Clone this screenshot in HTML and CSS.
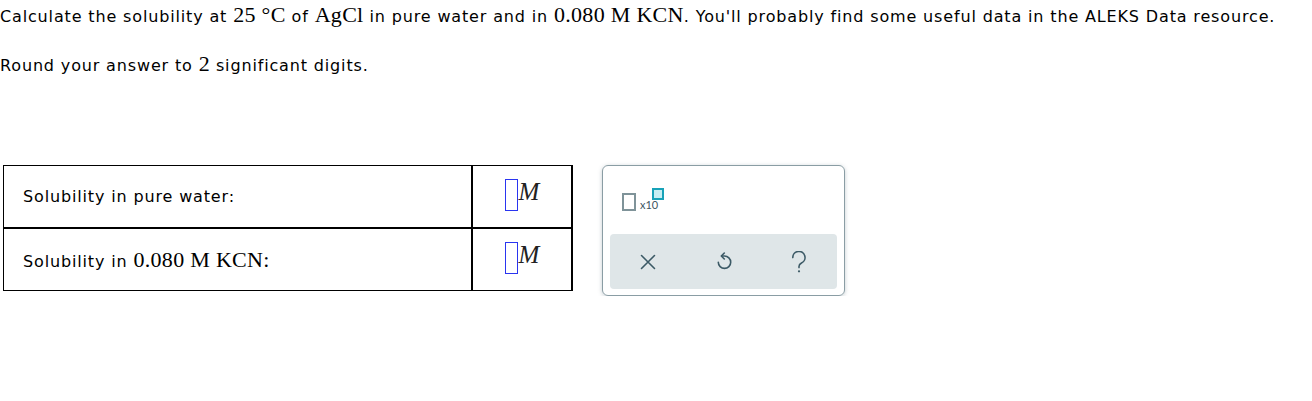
FILE: index.html
```html
<!DOCTYPE html>
<html>
<head>
<meta charset="utf-8">
<link rel="stylesheet" href="styles.css">
</head>
<body>
<div class="page">
  <p class="line first">Calculate the solubility at <span class="math">25 °C</span> of <span class="math">AgCl</span> in pure water and in <span class="math">0.080 M KCN</span>. You'll probably find some useful data in the ALEKS Data resource.</p>
  <p class="line second">Round your answer to <span class="math">2</span> significant digits.</p>

  <div class="answer-area">
    <table class="answers">
      <tr>
        <td class="label">Solubility in pure water:</td>
        <td class="value"><span class="slot"></span><span class="unit">M</span></td>
      </tr>
      <tr class="last">
        <td class="label">Solubility in <span class="math">0.080 M KCN:</span></td>
        <td class="value"><span class="slot"></span><span class="unit">M</span></td>
      </tr>
    </table>

    <div class="palette">
      <div class="palette-top">
        <div class="sci">
          <span class="sci-box"></span>
          <span class="sci-x">x10</span>
          <span class="sci-exp"></span>
        </div>
      </div>
      <div class="palette-bar">
        <button class="tool" aria-label="clear">
          <svg width="16" height="16" viewBox="0 0 16 16"><path d="M1.5 1.5 L14.5 14.5 M14.5 1.5 L1.5 14.5" stroke="#3c5a66" stroke-width="1.6" fill="none" stroke-linecap="round"/></svg>
        </button>
        <button class="tool" aria-label="undo">
          <svg width="16" height="19" viewBox="0 0 16 19"><path d="M6 4 H8.5 A6.2 6.2 0 1 1 2.3 10.2" stroke="#3c5a66" stroke-width="1.6" fill="none" stroke-linecap="round"/><path d="M8.3 1 L5.3 4 L8.3 7" stroke="#3c5a66" stroke-width="1.6" fill="none" stroke-linecap="round" stroke-linejoin="round"/></svg>
        </button>
        <button class="tool" aria-label="help">
          <svg width="16" height="22" viewBox="0 0 16 22"><path d="M1.8 6.6 A6.1 6.1 0 1 1 10.5 12 C8.9 12.9 8 13.8 8 15.4 V16.6" stroke="#3c5a66" stroke-width="1.6" fill="none" stroke-linecap="round"/><circle cx="8" cy="20.3" r="1.1" fill="#3c5a66"/></svg>
        </button>
      </div>
    </div>
  </div>
</div>
</body>
</html>
```
FILE: styles.css
```css
html, body {
  margin: 0;
  padding: 0;
  background: #ffffff;
}

.page {
  font-family: "DejaVu Sans", Verdana, sans-serif;
  font-size: 16px;
  letter-spacing: 0.85px;
  color: #000;
  padding-top: 4px;
}

.line {
  margin: 0;
  line-height: 20px;
  white-space: nowrap;
}

.second {
  margin-top: 26px;
}

.math {
  font-family: "Liberation Serif", "Times New Roman", serif;
  font-size: 22px;
  letter-spacing: 0.3px;
  line-height: 1;
}

.answer-area {
  display: flex;
  align-items: flex-start;
  gap: 29px;
  margin-top: 89px;
  padding-left: 3px;
}

.answers {
  border-collapse: separate;
  border-spacing: 0;
  border-left: 1px solid #000;
  border-top: 1px solid #000;
}

.answers td {
  border-right: 2px solid #000;
  border-bottom: 2px solid #000;
  padding: 0;
  height: 61px;
  vertical-align: middle;
}

.answers tr.last td {
  border-bottom-width: 1px;
  height: 61px;
}

.label {
  width: 448px;
  padding-left: 19px !important;
}

.value {
  width: 98px;
  text-align: center;
}

.value .slot,
.value .unit {
  vertical-align: middle;
}

.slot {
  display: inline-block;
  width: 11px;
  height: 30px;
  border: 1px solid #2a35f0;
  position: relative;
  top: -2px;
}

.unit {
  font-family: "Liberation Serif", "Times New Roman", serif;
  font-style: italic;
  font-size: 25px;
  letter-spacing: 0;
  margin-left: 1px;
  position: relative;
  top: -5px;
  color: #222;
}

.palette {
  border: 1px solid #8a9da4;
  border-radius: 6px;
  box-shadow: 0 1px 4px rgba(90, 110, 120, 0.35);
  display: flex;
  flex-direction: column;
  justify-content: space-between;
  padding: 0 7px 6px 7px;
  box-sizing: content-box;
  width: 227px;
  height: 123px;
  letter-spacing: 0;
}

.palette-top {
  padding: 22px 0 0 12px;
  height: 47px;
  box-sizing: border-box;
}

.sci {
  position: relative;
  width: 50px;
  height: 24px;
}

.sci-box {
  position: absolute;
  left: 0;
  top: 5px;
  width: 14px;
  height: 18px;
  border: 2px solid #7f9399;
  box-sizing: border-box;
}

.sci-x {
  position: absolute;
  left: 18px;
  top: 11px;
  font-family: "Lato", "DejaVu Sans", sans-serif;
  font-size: 11px;
  line-height: 11px;
  color: #3e555f;
}

.sci-exp {
  position: absolute;
  left: 30px;
  top: 0;
  width: 12px;
  height: 12px;
  border: 2px solid #17a2b8;
  background: #c6eef3;
  box-sizing: border-box;
}

.palette-bar {
  height: 55px;
  background: #dfe6e8;
  border-radius: 4px;
  display: flex;
  align-items: center;
  justify-content: space-between;
  padding: 0 28px;
}

.tool {
  border: 0;
  background: transparent;
  padding: 0;
  margin: 0;
  width: 20px;
  height: 24px;
  display: flex;
  align-items: center;
  justify-content: center;
}
```
